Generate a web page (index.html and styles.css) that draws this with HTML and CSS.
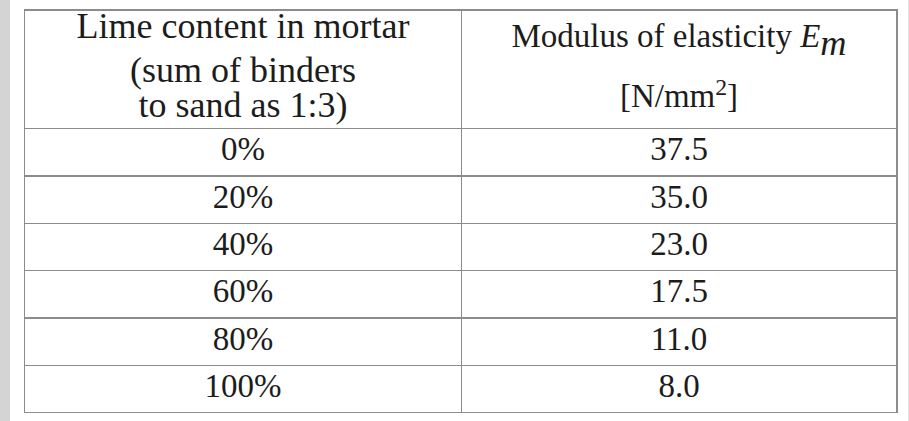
FILE: index.html
```html
<!DOCTYPE html>
<html lang="en">
<head>
  <meta charset="UTF-8">
  <title>Lime content and modulus of elasticity</title>
  <link rel="stylesheet" href="styles.css">
</head>
<body>

<div class="page">
  <div class="strip"></div>
  <div class="content">
    <table class="tabella">
      <tr class="intestazione">
        <th class="col-a">
          <div class="riga-1">Lime content in mortar</div>
          <div class="riga-2">(sum of binders</div>
          <div class="riga-3">to sand as 1:3)</div>
        </th>
        <th class="col-b">
          <div class="riga-1">Modulus of elasticity <i>E<sub>m</sub></i></div>
          <div class="riga-unita">[N/mm<sup>2</sup>]</div>
        </th>
      </tr>
      <tr><td>0%</td><td>37.5</td></tr>
      <tr class="spessa"><td>20%</td><td>35.0</td></tr>
      <tr><td>40%</td><td>23.0</td></tr>
      <tr><td>60%</td><td>17.5</td></tr>
      <tr class="spessa"><td>80%</td><td>11.0</td></tr>
      <tr><td>100%</td><td>8.0</td></tr>
    </table>
  </div>
</div>

</body>
</html>
```

FILE: styles.css
```css
body {
  margin: 0;
  background: #fff;
  font-family: "Liberation Serif", "Times New Roman", serif;
  color: #1c1c1c;
}

.page {
  display: flex;
  height: 421px;
  border-right: 1px solid #e2e2e2;
  box-sizing: border-box;
}

.strip {
  width: 10px;
  background-color: #d4d4d4;
}

.content {
  padding: 9px 0 0 14px;
}

/* tabella */
.tabella {
  border-collapse: collapse;
  width: 874px;
  border-top: 2px solid #8c8c8c;
  border-right: 2px solid #8c8c8c;
}

.tabella th,
.tabella td {
  border: 1px solid #8c8c8c;
  padding: 0;
  text-align: center;
  font-weight: normal;
}

.col-a {
  width: 436px;
}

.intestazione th {
  height: 117px;
  vertical-align: top;
}

.col-a div {
  font-size: 36px;
  line-height: 30px;
}

.col-a .riga-2 {
  margin-top: 14px;
}

.col-a .riga-3 {
  margin-top: 5px;
}

.col-b .riga-1 {
  font-size: 33px;
  line-height: 32px;
  margin-top: 9px;
}

.col-b .riga-unita {
  font-size: 33px;
  line-height: 32px;
  margin-top: 28px;
}

.col-b sub {
  font-size: 1.1em;
  vertical-align: -8px;
  line-height: 0;
}

.col-b sup {
  font-size: 0.72em;
  vertical-align: 12px;
  line-height: 0;
}

.tabella td {
  height: 40px;
  font-size: 33px;
  line-height: 40px;
  padding-bottom: 6px;
}

.spessa td {
  border-top-width: 2px;
}
```
